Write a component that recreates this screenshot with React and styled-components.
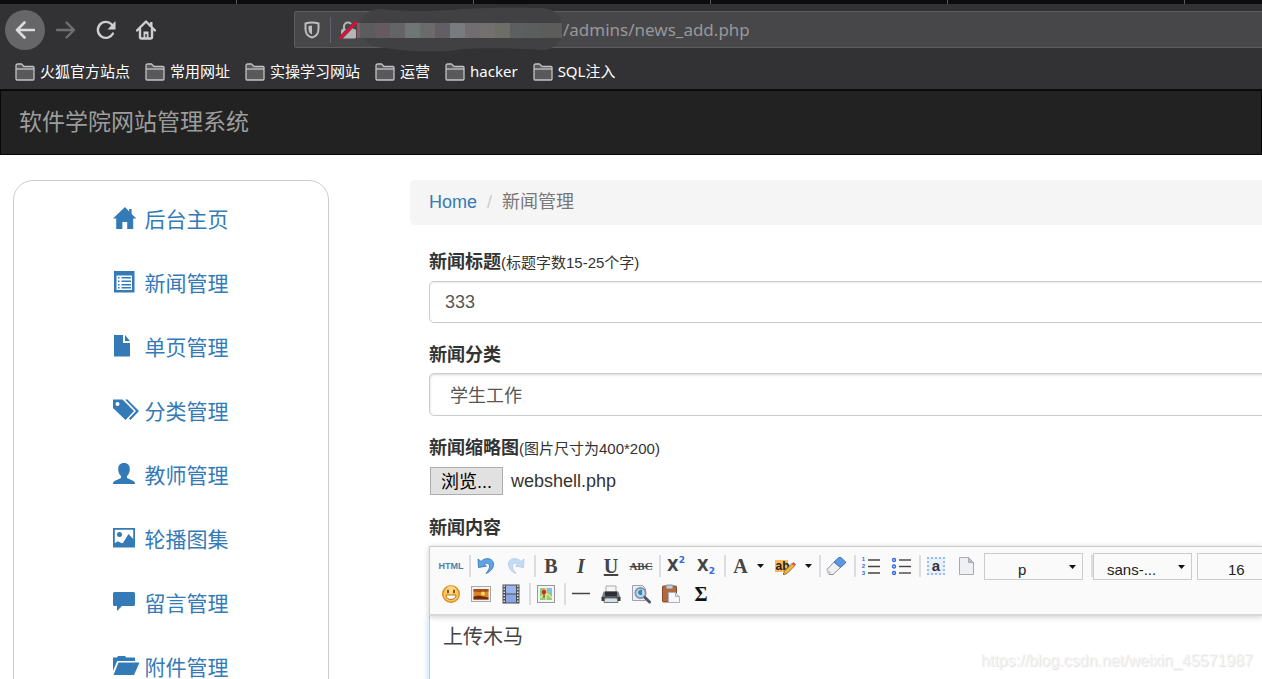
import { useRef, useState } from "react";
import styled, { createGlobalStyle } from "styled-components";

const folders = ["火狐官方站点", "常用网址", "实操学习网站", "运营", "hacker", "SQL注入"];

// mosaic over the hidden host name
const mosaic = [
  "#5b5c5e", "#655a5d", "#646466", "#707676", "#6b6b6c", "#625f64", "#7a7b7f",
  "#726d70", "#72716f", "#6e6e68", "#5b5f60", "#5c5e5d", "#5c5c5a",
];

const Svg = ({ w = 20, h = w, box, children }) => (
  <svg width={w} height={h} viewBox={box || `0 0 ${w} ${h}`} aria-hidden="true">
    {children}
  </svg>
);

const menu = [
  {
    label: "后台主页",
    icon: <path d="M12 0L0 11.5h3.2V22h6.2v-7h4.8v7h6V11.5h3.2L18.6 7V2h-2.5v2.4z" />,
  },
  {
    label: "新闻管理",
    icon: (
      <>
        <path fillRule="evenodd" d="M1 0h20.500v21.500H1zM3.500 4.500v14.500h15.500V4.500z" />
        <path d="M5 6h1.500v1.500H5zM5 9.500h1.500V11H5zM5 13h1.500v1.500H5zM5 16h1.500v1.500H5zM8.500 6H18v1.500H8.500zM8.500 9.500H18V11H8.500zM8.500 13H18v1.500H8.500zM8.500 16H18v1.500H8.500z" />
      </>
    ),
  },
  {
    label: "单页管理",
    icon: <path d="M1 0h9v8h7v13.500H1zM12 0l5 6h-5z" />,
  },
  {
    label: "分类管理",
    icon: (
      <>
        <path fillRule="evenodd" d="M0 .5h9.500L21 12l-8.500 9L0 9zM4.500 3a2 2 0 100 4 2 2 0 000-4z" />
        <path d="M12 .5h2.500L26 12l-8.500 9-1.600-1.600L23 12z" />
      </>
    ),
  },
  {
    label: "教师管理",
    icon: (
      <path d="M11 0c4 0 5.800 2.500 5.800 6 0 3-1 5.500-2.800 7v2l6.500 3c1 .5 1.500 1.500 1.500 3H0c0-1.500.5-2.500 1.500-3L8 15v-2C6.200 11.500 5.200 9 5.200 6 5.200 2.500 7 0 11 0z" />
    ),
  },
  {
    label: "轮播图集",
    icon: (
      <>
        <path fillRule="evenodd" d="M0 1h22v19.500H0zM1.800 2.800v13.500l3-2 3 1.500 2 .5L15.500 7l4.700 5V2.800z" />
        <circle cx="6.500" cy="7.500" r="2.500" />
      </>
    ),
  },
  {
    label: "留言管理",
    icon: <path d="M1.500 1h19A1.500 1.500 0 0122 2.500v11a1.500 1.500 0 01-1.500 1.500H9l-5 5v-5H1.500A1.500 1.500 0 010 13.500v-11A1.500 1.500 0 011.500 1z" />,
  },
  {
    label: "附件管理",
    icon: <path d="M0 2.500h4L5 1h7l1.200 1.500H22V6H4.200L0 16zM5.500 7.500h21L21 20H.5z" />,
  },
];

function Browser() {
  return (
    <Chrome>
      <TabStrip>
        <i />
        <i />
        <i />
        <i />
        <i />
        <i />
      </TabStrip>
      <NavRow>
        <NavButtons>
          <BackButton aria-label="后退">
            <Svg w={20}>
              <path d="M19 10H2M9.500 2.500L2 10l7.500 7.500" fill="none" stroke="#dcdcdd" strokeWidth="2.600" strokeLinecap="round" strokeLinejoin="round" />
            </Svg>
          </BackButton>
          <NavButton aria-label="前进">
            <Svg w={20}>
              <path d="M1 10h17M10.500 2.500L18 10l-7.500 7.500" fill="none" stroke="#6f6f71" strokeWidth="2.400" strokeLinecap="round" strokeLinejoin="round" />
            </Svg>
          </NavButton>
          <NavButton aria-label="刷新">
            <Svg w={20}>
              <path d="M17 13.500A8 8 0 1 1 15.800 4.500l1.500 2" fill="none" stroke="#cfcfd0" strokeWidth="2.400" strokeLinecap="round" />
              <path d="M19.500 1v8.500H11.500z" fill="#cfcfd0" />
            </Svg>
          </NavButton>
          <NavButton aria-label="主页">
            <Svg w={20}>
              <path d="M1 10.500L10 1.500l9 9M4 9v8a1.500 1.500 0 001.500 1.500h9A1.500 1.500 0 0016 17V9" fill="none" stroke="#cfcfd0" strokeWidth="2.400" strokeLinecap="round" strokeLinejoin="round" />
              <path d="M7.500 18v-6.500h5V18h-1.800v-4H9.300v4z" fill="#cfcfd0" />
              <path d="M14 2h2.500v5L14 5z" fill="#cfcfd0" />
            </Svg>
          </NavButton>
        </NavButtons>
        <UrlBar>
          <Svg w={18}>
            <path d="M9 1.500c2.500 0 4.500.4 6.500 1V8c0 4.500-2.500 7.500-6.500 8.500C5 15.500 2.500 12.500 2.500 8V2.500c2-.6 4-1 6.500-1z" fill="none" stroke="#bdbdbf" strokeWidth="2" />
            <path d="M9 4.500v9C6.500 12.500 5.500 10.800 5.500 8V5z" fill="#bdbdbf" />
          </Svg>
          <UrlDivider />
          <Svg w={18} h={20}>
            <path d="M5 9V6.500a4 4 0 018 0V9" fill="none" stroke="#b5b5b7" strokeWidth="2.200" />
            <rect x="2" y="9" width="15" height="9.500" rx="1.500" fill="#b5b5b7" />
            <path d="M1 18.500L17 2" stroke="#474749" strokeWidth="4" />
            <path d="M1 18.500L17.500 2" stroke="#ff0039" strokeWidth="2.400" />
          </Svg>
          <Redacted>
            <svg width="206" height="46" viewBox="0 0 206 46" aria-hidden="true">
              <path d="M3 17C7 6 14 2 24 2c26 3 50 2 70 1 32-3 66-2 92-2 10 1 20 8 20 20s-8 22-20 22c-30-2-60-2-80-1-24 4-54 3-78-1C10 40 0 30 3 17z" fill="#414143" />
              <rect y="16" width="3" height="15" fill="#865a65" />
              {mosaic.map((c, i) => (
                <rect key={i} x={i * 15 + 3} y="16" width={i === 12 ? 22 : 15} height="15" fill={c} />
              ))}
            </svg>
          </Redacted>
          <UrlInput aria-label="网址" defaultValue="/admins/news_add.php" />
        </UrlBar>
      </NavRow>
      <Bookmarks>
        {folders.map((name) => (
          <Bookmark href="#" key={name}>
            <Svg w={20} h={18}>
              <path d="M1 16V2.500A1.500 1.500 0 012.500 1h4l2.500 2.500h9A1 1 0 0119 4.500V16a1 1 0 01-1 1H2a1 1 0 01-1-1z" fill="#59595b" stroke="#c3c3c4" strokeWidth="1.300" />
              <path d="M1 6h18" stroke="#c3c3c4" strokeWidth="1.300" />
            </Svg>
            <span>{name}</span>
          </Bookmark>
        ))}
      </Bookmarks>
    </Chrome>
  );
}

const Caret = () => (
  <Svg w={7} h={4}>
    <path d="M0 0h7L3.500 4z" fill="#111" />
  </Svg>
);

function Toolbar() {
  return (
    <Tools>
      <ToolRow>
        <Tool aria-label="HTML"><HtmlMark>HTML</HtmlMark></Tool>
        <Separator />
        <Tool aria-label="撤销"><UndoIcon /></Tool>
        <Tool aria-label="重做" $faded><UndoIcon flip /></Tool>
        <Separator />
        <Tool aria-label="加粗"><Letter>B</Letter></Tool>
        <Tool aria-label="斜体"><Letter $italic>I</Letter></Tool>
        <Tool aria-label="下划线"><Letter $line="underline">U</Letter></Tool>
        <Tool aria-label="删除线"><Letter $line="line-through" $small>ABC</Letter></Tool>
        <Separator />
        <Tool aria-label="上标"><Script>X<sup>2</sup></Script></Tool>
        <Tool aria-label="下标"><Script>X<sub>2</sub></Script></Tool>
        <Separator />
        <Tool aria-label="字体颜色" $wide><Letter>A</Letter><Caret /></Tool>
        <Tool aria-label="背景色" $wide>
          <Marker>
            ab
            <svg width="13" height="13" viewBox="0 0 13 13" aria-hidden="true">
              <path d="M0 13l1.500-4L9 1.500l2.500 2.500L4 11.500z" fill="#f2b63c" stroke="#7b5a22" strokeWidth=".8" />
              <path d="M9 1.500L10.500 0 13 2.500 11.500 4z" fill="#e8484d" />
            </svg>
          </Marker>
          <Caret />
        </Tool>
        <Separator />
        <Tool aria-label="清除格式">
          <Svg w={20}>
            <path d="M1 13.500L8 6l6.500 5.500L7 18.500H3z" fill="#f0f0f2" stroke="#8e9097" />
            <path d="M8 6l5-4.500h2L19.500 6v1l-5 4.500z" fill="#5a98e6" stroke="#456fa8" />
            <path d="M3 18.500l-2-2v-3l4 3z" fill="#c3c5ca" />
          </Svg>
        </Tool>
        <Separator />
        <Tool aria-label="有序列表">
          <ListMark>
            <Numbers>
              <span>1</span>
              <span>2</span>
              <span>3</span>
            </Numbers>
            <Svg w={12} h={20}>
              <path d="M0 4h12M0 10.500h12M0 17h12" stroke="#444" strokeWidth="1.400" />
            </Svg>
          </ListMark>
        </Tool>
        <Tool aria-label="无序列表">
          <Svg w={20}>
            {[4, 10.5, 17].map((y) => (
              <g key={y}>
                <circle cx="3" cy={y} r="1.500" fill="#fff" stroke="#3568e8" strokeWidth="1.400" />
                <path d={`M8 ${y}h12`} stroke="#444" strokeWidth="1.400" />
              </g>
            ))}
          </Svg>
        </Tool>
        <Separator />
        <Tool aria-label="全选"><SelectAll>a</SelectAll></Tool>
        <Tool aria-label="清空文档">
          <Svg w={20}>
            <path d="M3.500 1.500h9l5 5v12h-14z" fill="#eef0f5" stroke="#a9abb1" />
            <path d="M12.500 1.500v5h5z" fill="#b9bcc6" stroke="#a9abb1" />
          </Svg>
        </Tool>
        <Pick label="段落格式" value="p" options={["p", "h1", "h2"]} pad={33} $first />
        <Separator />
        <Pick label="字体" value="sans-..." options={["sans-...", "serif"]} pad={13} />
        <Pick label="字号" value="16" options={["16", "18", "24"]} pad={30} />
      </ToolRow>
      <ToolRow>
        <Tool aria-label="表情">
          <Svg w={20}>
            <circle cx="10" cy="10" r="8.300" fill="#fbc75d" stroke="#e08a1e" strokeWidth="1.400" />
            <circle cx="10" cy="6.500" r="5" fill="#fde3a0" opacity=".6" />
            <path d="M7 6.500v2M13 6.500v2" stroke="#8a5a1a" strokeWidth="2" strokeLinecap="round" />
            <path d="M5 11h10c0 2.800-2.200 4.500-5 4.500S5 13.800 5 11z" fill="#fff" stroke="#b8701f" />
          </Svg>
        </Tool>
        <Tool aria-label="图片">
          <Svg w={20}>
            <rect x=".5" y="2.500" width="19" height="15" fill="#f3f3f3" stroke="#a8a8a8" />
            <rect x="2.500" y="5" width="15" height="10.500" fill="#e08324" />
            <path d="M2.500 5h15v2.500l-6 1-9-1z" fill="#a5521a" />
            <circle cx="12" cy="9.500" r="2" fill="#ffe066" />
            <path d="M2.500 12.500l5-1 10 2v2h-15z" fill="#6b2f10" />
          </Svg>
        </Tool>
        <Tool aria-label="视频">
          <Svg w={20}>
            <rect x="1.500" y=".5" width="17" height="19" fill="#4a4d52" />
            <rect x="5" y="1.500" width="10" height="8" fill="#9ab4ee" />
            <rect x="5" y="10.500" width="10" height="8" fill="#8aa5e6" />
            <path d="M3.200 1.500v18M16.800 1.500v18" stroke="#e8e8e8" strokeWidth="1.500" strokeDasharray="1.500 1.500" />
          </Svg>
        </Tool>
        <Separator />
        <Tool aria-label="地图">
          <Svg w={20}>
            <rect x="1.500" y="1.500" width="17" height="17" fill="#f4f4f4" stroke="#999" />
            <rect x="4" y="4" width="12" height="12" fill="#8ccf7e" />
            <path d="M10 4h6v7l-3-3z" fill="#7cbff0" />
            <path d="M4 14l6-5 6 5M10 4v12" stroke="#f4e28a" strokeWidth="1.500" fill="none" />
            <circle cx="8" cy="8" r="2.300" fill="#d92b2b" />
            <path d="M8 9.500v4" stroke="#7d1c1c" />
          </Svg>
        </Tool>
        <Separator />
        <Tool aria-label="分隔线">
          <Svg w={20}><path d="M1 9.500h18" stroke="#444" strokeWidth="1.500" /></Svg>
        </Tool>
        <Tool aria-label="打印">
          <Svg w={20}>
            <path d="M5 8V2h10v6" fill="#f6f6f6" stroke="#aaa" />
            <path d="M2.500 7.500h15l2 6.500H.5z" fill="#7d8086" />
            <path d="M4 7.500h12v5H4z" fill="#2c2f34" />
            <path d="M.5 13h19v4H.5z" fill="#3a3d42" />
            <path d="M4 14h12l1 4.500H3z" fill="#cfe3e8" stroke="#777" />
          </Svg>
        </Tool>
        <Tool aria-label="预览">
          <Svg w={20}>
            <path d="M1.500 1.500h10l3 3v12h-13z" fill="#e8edf7" stroke="#9aa3b5" />
            <circle cx="9.500" cy="9" r="5.200" fill="#b5dcef" stroke="#8b919a" strokeWidth="1.700" />
            <path d="M7 8c1-2 3-3 4-2s-1 2 0 3-1 3-2 2-2-1-2-3z" fill="#3784b8" />
            <path d="M14 13.500l4.500 4.500" stroke="#55585d" strokeWidth="3" strokeLinecap="round" />
          </Svg>
        </Tool>
        <Tool aria-label="粘贴">
          <Svg w={20}>
            <rect x="1.500" y="2" width="14" height="16" rx="1" fill="#b4683c" stroke="#8a4a26" />
            <rect x="5" y="1" width="7" height="4" rx="1" fill="#c9ccd1" stroke="#777" strokeWidth=".8" />
            <path d="M7.500 8.500h7l4 4v6h-11z" fill="#f5f7fc" stroke="#aab0bd" />
            <path d="M14.500 8.500v4h4" fill="#d5dae6" stroke="#aab0bd" />
          </Svg>
        </Tool>
        <Tool aria-label="公式"><Letter $sigma>Σ</Letter></Tool>
      </ToolRow>
    </Tools>
  );
}

const UndoIcon = ({ flip }) => (
  <Svg w={20}>
    <g transform={flip ? "matrix(-1 0 0 1 20 0)" : undefined}>
      <path d="M2 3l.5 8.500L10.500 10 8 8.200C10 6.500 13 7 13.500 9.500c.4 2.500-1 5-3.500 8 5-2 7.500-5.500 7.500-9.500C17.500 2.500 9.500.5 5 5.500z" fill="#5fa3e8" stroke="#3577bd" strokeWidth=".9" strokeLinejoin="round" />
    </g>
  </Svg>
);

const Pick = ({ label, value, options, pad, $first }) => (
  <PickBox $pad={pad} $first={$first}>
    <select aria-label={label} defaultValue={value}>
      {options.map((o) => (
        <option key={o}>{o}</option>
      ))}
    </select>
    <Caret />
  </PickBox>
);

function NewsForm() {
  const fileRef = useRef(null);
  const [file, setFile] = useState("webshell.php");

  const handleFile = (e) => {
    if (e.target.files[0]) {
      setFile(e.target.files[0].name);
    }
  };

  return (
    <Form onSubmit={(e) => e.preventDefault()}>
      <Label htmlFor="title">
        新闻标题<small>(标题字数15-25个字)</small>
      </Label>
      <TextInput id="title" defaultValue="333" />
      <Label htmlFor="category">新闻分类</Label>
      <Category id="category" defaultValue="学生工作">
        <option>学生工作</option>
        <option>学院新闻</option>
      </Category>
      <Label htmlFor="thumb">
        新闻缩略图<small>(图片尺寸为400*200)</small>
      </Label>
      <FileRow>
        <input id="thumb" type="file" hidden ref={fileRef} onChange={handleFile} />
        <BrowseButton type="button" onClick={() => fileRef.current.click()}>
          浏览...
        </BrowseButton>
        <span>{file}</span>
      </FileRow>
      <Label htmlFor="content">新闻内容</Label>
      <Editor>
        <Toolbar />
        <Content id="content" defaultValue="上传木马" />
      </Editor>
    </Form>
  );
}

export default function App() {
  return (
    <Page>
      <GlobalStyle />
      <Browser />
      <Navbar>
        <Brand href="#">软件学院网站管理系统</Brand>
      </Navbar>
      <Body>
        <Sidebar>
          {menu.map((item) => (
            <MenuLink href="#" key={item.label}>
              <svg width="27" height="22" viewBox="0 0 27 22" aria-hidden="true">
                {item.icon}
              </svg>
              <span>{item.label}</span>
            </MenuLink>
          ))}
        </Sidebar>
        <Main>
          <Breadcrumb>
            <a href="#">Home</a>
            <i>/</i>
            <span>新闻管理</span>
          </Breadcrumb>
          <NewsForm />
        </Main>
      </Body>
      <Watermark>https://blog.csdn.net/weixin_45571987</Watermark>
    </Page>
  );
}

const GlobalStyle = createGlobalStyle`
  * {
    box-sizing: border-box;
  }

  body {
    margin: 0;
    background: #fff;
    color: #333;
    font-family: "Liberation Sans", "Noto Sans CJK SC", sans-serif;
    font-size: 18px;
  }

  button, input, select, textarea {
    font-family: inherit;
  }

  a {
    text-decoration: none;
  }

  svg {
    display: block;
    flex: none;
  }
`;

const Page = styled.div`
  position: relative;
  display: flex;
  flex-direction: column;
  height: 100vh;
  overflow: hidden;
`;

const Chrome = styled.header`
  flex: none;
  background: #323234;
  border-bottom: 1px solid #0a0a0b;
  font-family: "Noto Sans", "Noto Sans CJK SC", sans-serif;
`;

const TabStrip = styled.div`
  display: flex;
  height: 4px;
  overflow: hidden;
  background: #0c0c0d;

  i {
    flex: none;
    width: 237px;
    border-right: 1px solid #59595b;
  }
`;

const NavRow = styled.div`
  display: flex;
  align-items: center;
  height: 51px;
  padding-left: 5px;
`;

const NavButtons = styled.div`
  display: flex;
  align-items: center;
  width: 289px;
`;

const NavButton = styled.button`
  display: flex;
  align-items: center;
  justify-content: center;
  width: 40px;
  height: 40px;
  padding: 0 0 0 1px;
  border: none;
  background: none;
`;

const BackButton = styled(NavButton)`
  padding: 0;
  border-radius: 50%;
  background: #666668;
`;

const UrlBar = styled.div`
  display: flex;
  flex: 1;
  align-items: center;
  height: 37px;
  padding-left: 8px;
  margin-right: -4px;
  border: 1px solid #5d5d5f;
  border-radius: 2px;
  background: #474749;
`;

const UrlDivider = styled.span`
  width: 1px;
  height: 26px;
  margin: 0 8px 0 9px;
  background: #5f6270;
`;

const Redacted = styled.div`
  margin: -5px 0;
`;

const UrlInput = styled.input`
  flex: 1;
  min-width: 0;
  padding: 0;
  border: none;
  outline: none;
  background: none;
  color: #97979a;
  font-size: 17px;
`;

const Bookmarks = styled.nav`
  display: flex;
  align-items: center;
  gap: 15px;
  height: 34px;
  padding-left: 15px;
`;

const Bookmark = styled.a`
  display: flex;
  align-items: center;
  gap: 5px;
  color: #fff;
  font-size: 15px;
  line-height: 20px;

  span {
    padding-bottom: 2px;
  }
`;

const Navbar = styled.nav`
  flex: none;
  display: flex;
  align-items: center;
  height: 65px;
  padding: 0 0 2px 18px;
  border: 1px solid #080808;
  background: #222;
`;

const Brand = styled.a`
  color: #9d9d9d;
  font-size: 23px;
  line-height: 28px;
`;

const Body = styled.div`
  display: flex;
  align-items: flex-start;
  padding: 25px 0 0 13px;
`;

const Sidebar = styled.aside`
  flex: none;
  width: 316px;
  padding: 7px 0 20px;
  border: 1px solid #ccc;
  border-radius: 20px;
`;

const MenuLink = styled.a`
  display: flex;
  align-items: center;
  justify-content: center;
  gap: 5px;
  height: 64px;
  padding-right: 1px;
  color: #337ab7;
  font-size: 21px;
  line-height: 28px;

  svg {
    fill: currentColor;
    margin-bottom: 4px;
  }
`;

const Main = styled.main`
  flex: 1;
  min-width: 0;
  margin-left: 81px;
`;

const Breadcrumb = styled.nav`
  display: flex;
  align-items: center;
  height: 45px;
  padding-left: 19px;
  border-radius: 5px 0 0 5px;
  background: #f5f5f5;
  color: #777;
  line-height: 25px;

  a {
    color: #337ab7;
  }

  i {
    padding: 0 10px;
    color: #ccc;
    font-style: normal;
  }
`;

const Form = styled.form`
  display: flex;
  flex-direction: column;
  padding: 24px 0 0 19px;
`;

const Label = styled.label`
  margin-bottom: 5px;
  font-weight: bold;
  line-height: 26px;

  small {
    font-size: 15px;
    font-weight: normal;
  }
`;

const TextInput = styled.input`
  height: 42px;
  margin: 0 -6px 19px 0;
  padding: 0 15px;
  border: 1px solid #ccc;
  border-radius: 5px;
  outline: none;
  background: #fff;
  box-shadow: inset 0 1px 1px rgba(0, 0, 0, 0.08);
  color: #555;
  font-size: 18px;
`;

const Category = styled.select`
  height: 43px;
  margin: 0 -6px 19px 0;
  padding: 2px 20px 0;
  appearance: none;
  border: 1px solid #ccc;
  border-radius: 5px;
  background: #fff;
  box-shadow: inset 0 1px 3px rgba(0, 0, 0, 0.16);
  color: #555;
  font-size: 18px;
`;

const FileRow = styled.div`
  display: flex;
  align-items: center;
  gap: 8px;
  height: 28px;
  margin: 0 0 20px 1px;
`;

const BrowseButton = styled.button`
  width: 73px;
  height: 28px;
  padding: 2px 0 0;
  border: 1px solid #adadad;
  background: #e1e1e1;
  color: #000;
  font-size: 18px;
  line-height: 24px;
`;

const Editor = styled.div`
  display: flex;
  flex-direction: column;
`;

const Tools = styled.div`
  position: relative;
  padding: 5px 0 6px 6px;
  border: 1px solid #ccc;
  border-right: none;
  border-bottom: 2px solid #d8d9db;
  background: #fafafa;
  box-shadow: 0 1px 6px rgba(0, 0, 0, 0.2);
`;

const ToolRow = styled.div`
  display: flex;
  align-items: center;
  height: 28px;
  overflow: hidden;
`;

const Tool = styled.button`
  flex: none;
  display: flex;
  align-items: center;
  justify-content: center;
  gap: ${(props) => (props.$wide ? "9px" : "0")};
  width: ${(props) => (props.$wide ? "45px" : "30px")};
  height: 28px;
  padding: 0;
  border: none;
  background: none;
  opacity: ${(props) => (props.$faded ? 0.35 : 1)};
`;

const Separator = styled.span`
  flex: none;
  width: 2px;
  height: 22px;
  margin: 0 0 0 3px;
  background: #dcdde2;
`;

const HtmlMark = styled.span`
  color: #4a7fae;
  font-size: 9px;
  font-weight: bold;
`;

const Letter = styled.span`
  color: ${(props) => (props.$sigma ? "#111" : "#444")};
  font-family: "Liberation Serif", serif;
  font-size: ${(props) => (props.$small ? "11px" : "20px")};
  font-style: ${(props) => (props.$italic ? "italic" : "normal")};
  font-weight: bold;
  line-height: 20px;
  text-decoration: ${(props) => props.$line || "none"};
`;

const Script = styled.span`
  display: flex;
  color: #444;
  font-family: "DejaVu Sans", sans-serif;
  font-size: 15px;
  font-weight: bold;
  line-height: 20px;

  sup,
  sub {
    color: #3568e8;
    font-size: 9px;
    line-height: 9px;
  }

  sub {
    align-self: flex-end;
  }
`;

const Marker = styled.span`
  display: flex;
  align-items: center;
  height: 12px;
  background: linear-gradient(90deg, #f9b95b 13px, transparent 13px);
  color: #222;
  font-size: 12px;
  font-weight: bold;
  line-height: 12px;

  svg {
    margin: 4px 0 0 -7px;
  }
`;

const ListMark = styled.span`
  display: flex;
  align-items: center;
  gap: 3px;
`;

const Numbers = styled.span`
  display: grid;
  grid-auto-rows: 7px;
  color: #3568e8;
  font-size: 6px;
  font-weight: bold;
  line-height: 7px;
`;

const SelectAll = styled.span`
  width: 18px;
  height: 18px;
  border: 2px dotted #9dbcf5;
  background: #e9f1ff;
  color: #333;
  font-size: 15px;
  font-weight: bold;
  line-height: 13px;
`;

const PickBox = styled.span`
  position: relative;
  flex: none;
  width: 99px;
  height: 27px;
  margin: 0 5px 0 ${(props) => (props.$first ? "3px" : "0")};

  select {
    width: 100%;
    height: 100%;
    padding: 6px 0 0 ${(props) => props.$pad}px;
    appearance: none;
    border: 1px solid #ccc;
    border-radius: 0;
    background: #fafafa;
    color: #222;
    font-size: 15px;
  }

  svg {
    position: absolute;
    top: 12px;
    right: 7px;
  }
`;

const Content = styled.textarea`
  height: 220px;
  padding: 7px 13px;
  resize: none;
  border: none;
  border-left: 1px solid #b4cfe6;
  outline: none;
  box-shadow: -1px 0 6px rgba(102, 175, 233, 0.4);
  background: #fff;
  color: #444;
  font-size: 20px;
  line-height: 28px;
`;

const Watermark = styled.div`
  position: absolute;
  right: 9px;
  bottom: 9px;
  color: #f4f4f4;
  font-size: 16px;
  line-height: 18px;
  text-shadow: 1px 1px 1px #e0e0e0;
`;
